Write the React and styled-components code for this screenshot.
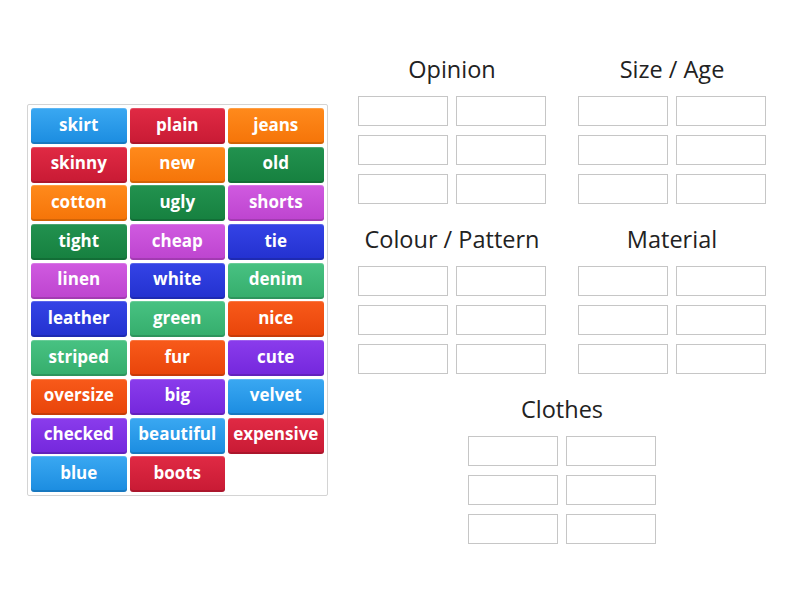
import React from "react";
import styled, { createGlobalStyle } from "styled-components";

const Global = createGlobalStyle`
  html, body { margin: 0; padding: 0; background: #ffffff; }
  body { font-family: "Open Sans", "Noto Sans", sans-serif; }
`;

const COLORS = [
  ["#3aa8f2", "#1b8ce0"], // blue
  ["#e02a44", "#c81a34"], // red
  ["#ff8a1c", "#f57408"], // orange
  ["#22924f", "#16803f"], // dark green
  ["#d05ae0", "#bd44cf"], // magenta
  ["#3443e6", "#2331cf"], // dark blue
  ["#48c282", "#35ad6c"], // light green
  ["#f85a1a", "#e8440a"], // orange red
  ["#8a3cec", "#7427dc"], // violet
];

const WORDS = [
  "skirt", "plain", "jeans",
  "skinny", "new", "old",
  "cotton", "ugly", "shorts",
  "tight", "cheap", "tie",
  "linen", "white", "denim",
  "leather", "green", "nice",
  "striped", "fur", "cute",
  "oversize", "big", "velvet",
  "checked", "beautiful", "expensive",
  "blue", "boots",
];

const GROUPS = [["Opinion", "Size / Age"], ["Colour / Pattern", "Material"], ["Clothes"]];

const Page = styled.div`
  display: flex;
  align-items: flex-start;
  padding-left: 27px;
  gap: 30px;
  width: 800px;
  height: 600px;
  box-sizing: border-box;
`;

const Panel = styled.div`
  margin-top: 104px;
  width: 301px;
  height: 392px;
  box-sizing: border-box;
  border: 1px solid #d4d4d4;
  border-radius: 2px;
  padding: 3px 3px 0 3px;
  display: grid;
  grid-template-columns: repeat(3, 95.5px);
  grid-auto-rows: 36px;
  column-gap: 3px;
  row-gap: 2.7px;
  align-content: start;
`;

const Tile = styled.div`
  display: flex;
  align-items: center;
  justify-content: center;
  border-radius: 3px;
  background: linear-gradient(to bottom, ${(p) => p.$top}, ${(p) => p.$bottom});
  box-shadow: inset 0 -2px 0 rgba(0, 0, 0, 0.14), inset 0 1px 0 rgba(255, 255, 255, 0.18);
  color: #ffffff;
  font-family: "Open Sans", sans-serif;
  font-weight: 700;
  font-size: 17px;
  line-height: 1;
  padding-bottom: 4px;
  box-sizing: border-box;
  white-space: nowrap;
`;

const Right = styled.div`
  margin-top: 54px;
  display: flex;
  flex-direction: column;
  align-items: center;
  row-gap: 20px;
  width: 408px;
`;

const GroupRow = styled.div`
  display: flex;
  gap: 32px;
`;

const Group = styled.div`
  display: flex;
  flex-direction: column;
  align-items: center;
  width: 188px;
`;

const Title = styled.div`
  height: 30px;
  line-height: 30px;
  font-family: "Open Sans", sans-serif;
  font-size: 23.5px;
  color: #222222;
  white-space: nowrap;
  margin-bottom: 12px;
`;

const Slots = styled.div`
  display: grid;
  grid-template-columns: repeat(2, 90px);
  grid-auto-rows: 30px;
  column-gap: 8px;
  row-gap: 9px;
`;

const Slot = styled.div`
  border: 1px solid #c6c6c6;
  background: #ffffff;
  box-sizing: border-box;
`;

export default function App() {
  return (
    <>
      <Global />
      <Page>
        <Panel>
          {WORDS.map((w, i) => {
            const row = Math.floor(i / 3);
            const col = i % 3;
            const [t, b] = COLORS[(row + col) % COLORS.length];
            return (
              <Tile key={w} $top={t} $bottom={b}>
                {w}
              </Tile>
            );
          })}
        </Panel>
        <Right>
          {GROUPS.map((row, ri) => (
            <GroupRow key={ri}>
              {row.map((g) => (
                <Group key={g}>
                  <Title>{g}</Title>
                  <Slots>
                    {Array.from({ length: 6 }).map((_, k) => (
                      <Slot key={k} />
                    ))}
                  </Slots>
                </Group>
              ))}
            </GroupRow>
          ))}
        </Right>
      </Page>
    </>
  );
}
